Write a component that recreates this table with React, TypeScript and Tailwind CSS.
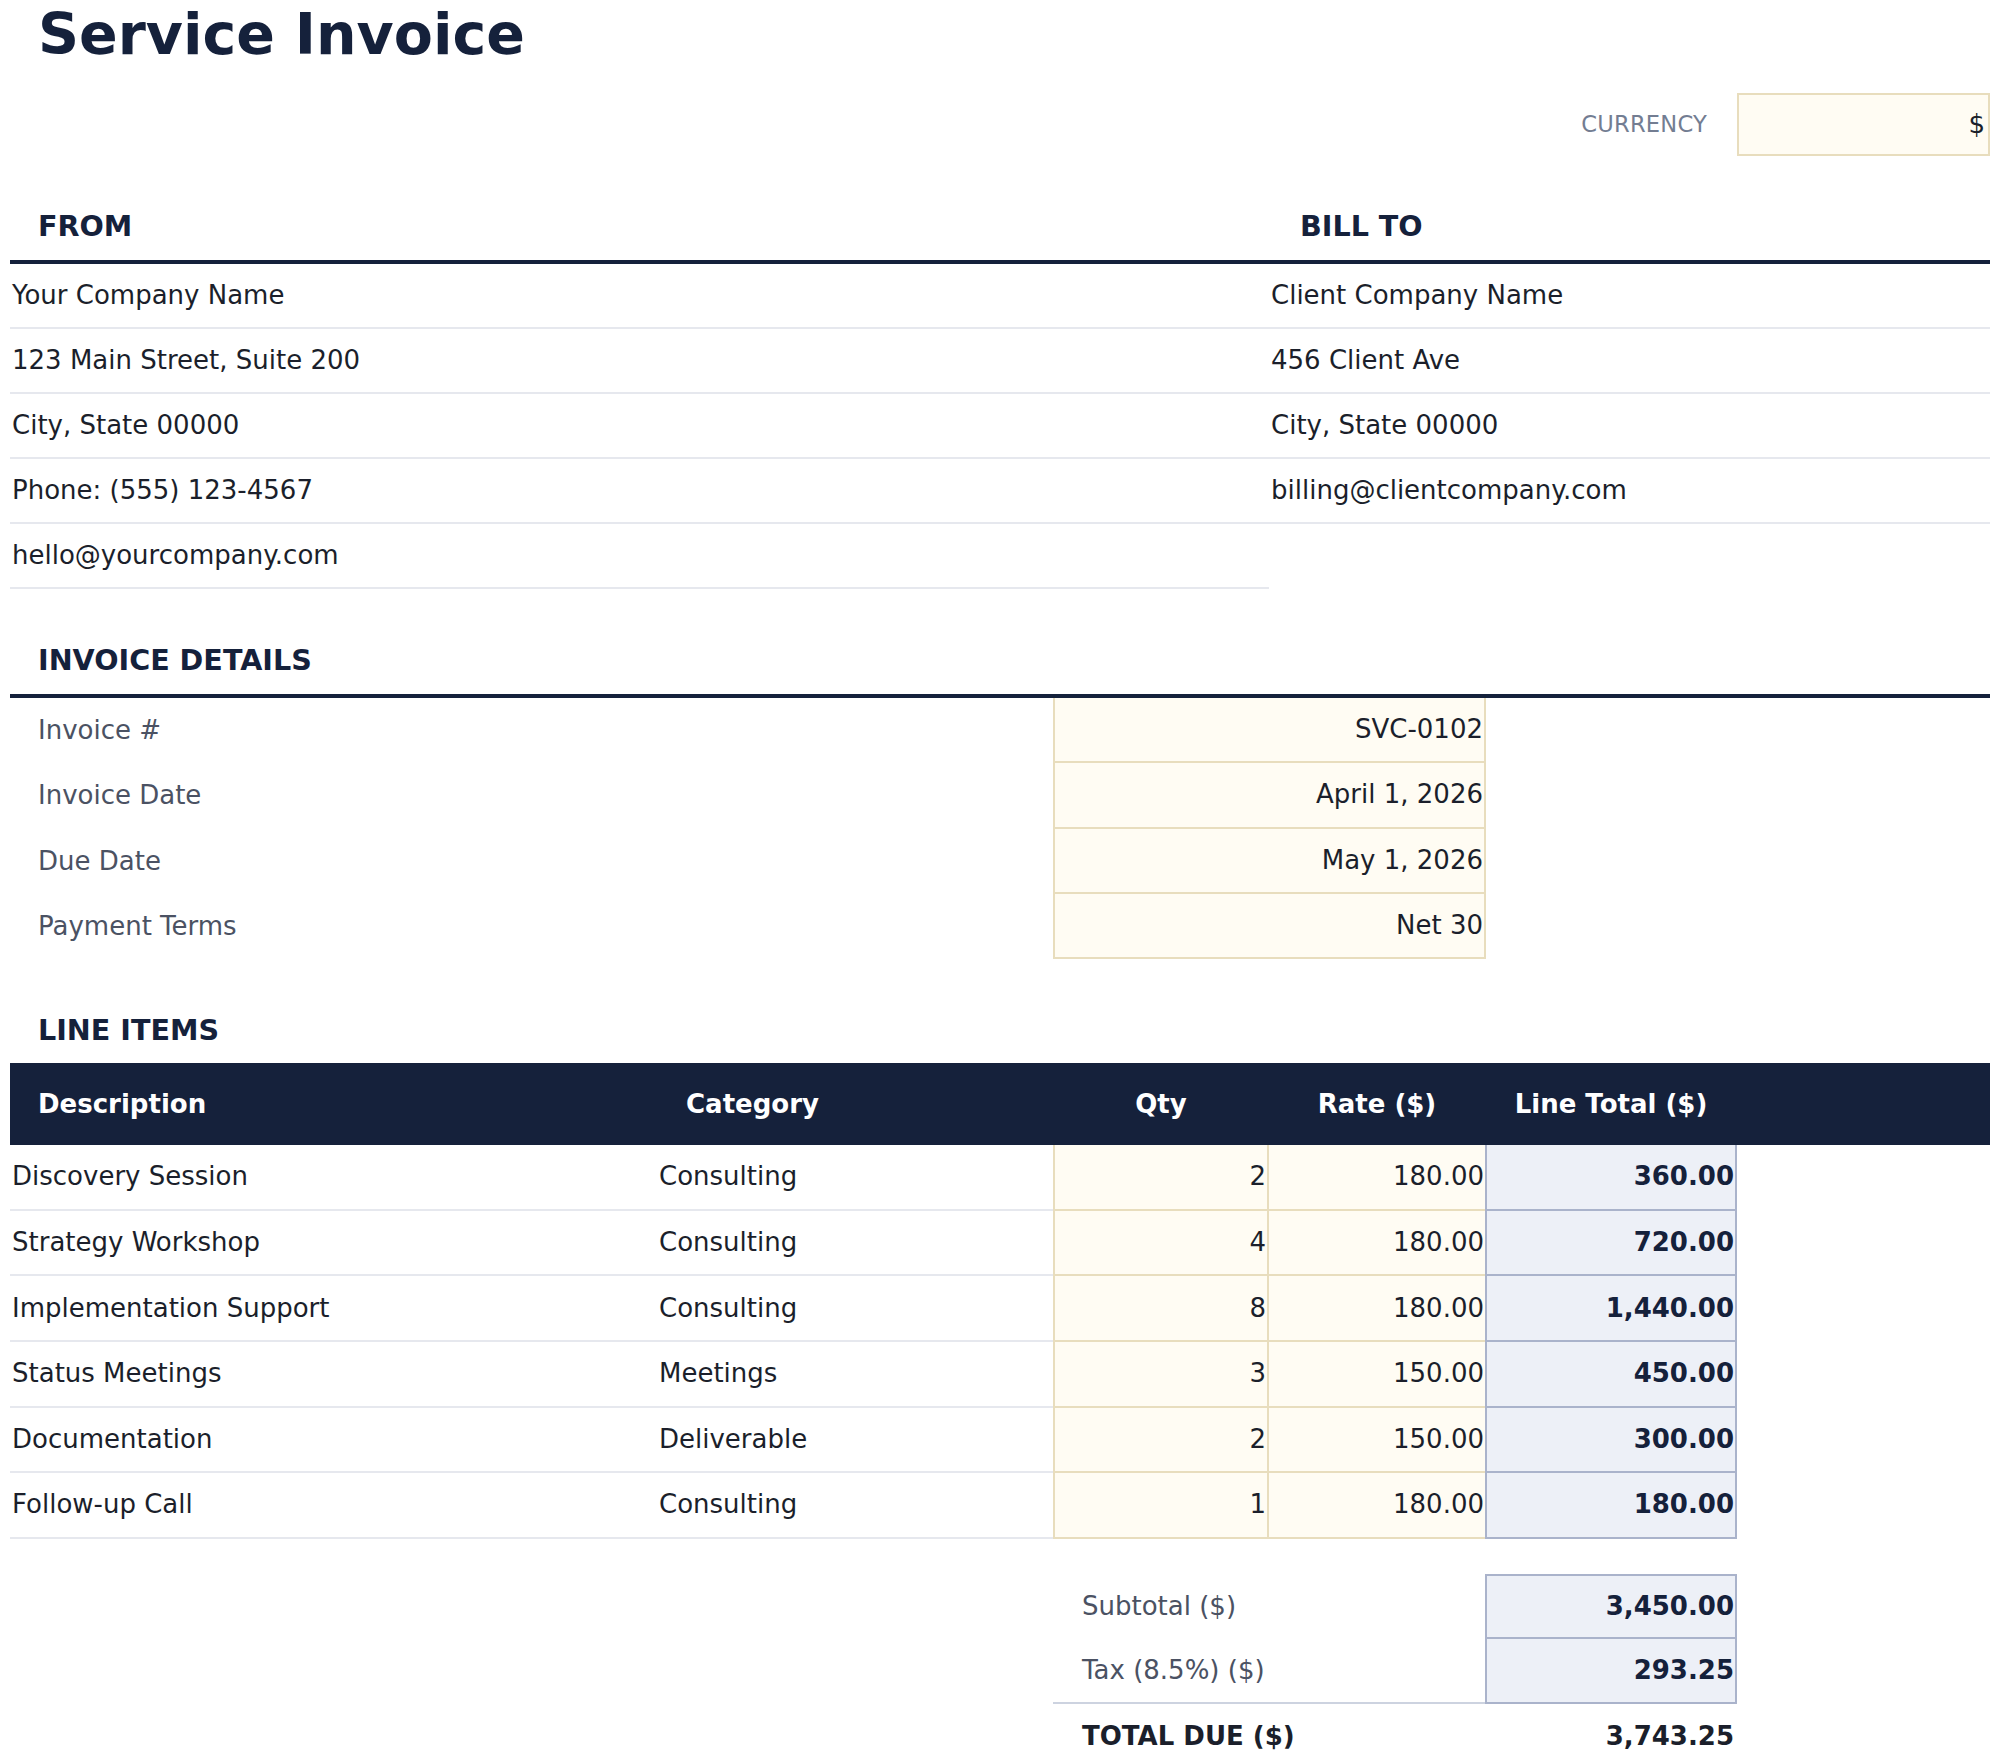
const navy = 'text-[#15213b]'

const fromLines = ['Your Company Name', '123 Main Street, Suite 200', 'City, State 00000', 'Phone: (555) 123-4567', 'hello@yourcompany.com']
const billLines = ['Client Company Name', '456 Client Ave', 'City, State 00000', 'billing@clientcompany.com']

const details = [
  { label: 'Invoice #', value: 'SVC-0102' },
  { label: 'Invoice Date', value: 'April 1, 2026' },
  { label: 'Due Date', value: 'May 1, 2026' },
  { label: 'Payment Terms', value: 'Net 30' },
]

const items = [
  { desc: 'Discovery Session', cat: 'Consulting', qty: 2, rate: '180.00', total: '360.00' },
  { desc: 'Strategy Workshop', cat: 'Consulting', qty: 4, rate: '180.00', total: '720.00' },
  { desc: 'Implementation Support', cat: 'Consulting', qty: 8, rate: '180.00', total: '1,440.00' },
  { desc: 'Status Meetings', cat: 'Meetings', qty: 3, rate: '150.00', total: '450.00' },
  { desc: 'Documentation', cat: 'Deliverable', qty: 2, rate: '150.00', total: '300.00' },
  { desc: 'Follow-up Call', cat: 'Consulting', qty: 1, rate: '180.00', total: '180.00' },
]

const cols = 'grid grid-cols-[647px_396px_216px_216px_252px_1fr]'

function SectionHeading({ children, className = '' }: { children: React.ReactNode; className?: string }) {
  return (
    <div className={`pb-[14px] border-b-4 border-[#15213b] text-[28.6px] font-bold leading-[40px] ${navy} ${className}`}>
      {children}
    </div>
  )
}

function LineRow({ text }: { text: string }) {
  return (
    <div className="h-[65px] flex items-center pl-[2px] border-b-2 border-[#e6e8ee]">{text}</div>
  )
}

export default function App() {
  return (
    <div className="min-h-screen bg-white px-[10px] pb-10 font-['DejaVu_Sans',sans-serif] text-[26px] text-[#1b1f2b]">
      <h1 className={`pl-[28px] text-[57px] font-bold leading-[68px] ${navy}`}>Service Invoice</h1>

      <div className={`${cols} mt-[25px] h-[63px]`}>
        <div className="col-start-5 flex items-center justify-end pr-[30px] text-[22.6px] tracking-[0.2px] text-[#737d92]">CURRENCY</div>
        <div className="flex items-center justify-end pr-[3px] bg-[#fffcf3] border-2 border-[#e8ddbd]">$</div>
      </div>

      <div className="mt-[50px] grid grid-cols-[1259px_1fr]">
        <div>
          <SectionHeading className="pl-[28px]">FROM</SectionHeading>
          {fromLines.map(l => <LineRow key={l} text={l} />)}
        </div>
        <div>
          <SectionHeading className="pl-[31px]">BILL TO</SectionHeading>
          {billLines.map(l => <LineRow key={l} text={l} />)}
        </div>
      </div>

      <div className="mt-[51px]">
        <SectionHeading className="pl-[28px]">INVOICE DETAILS</SectionHeading>
        {details.map(d => (
          <div key={d.label} className="grid grid-cols-[1043px_433px_1fr] h-[65.3px]">
            <div className="flex items-center pl-[28px] text-[#4b5263]">{d.label}</div>
            <div className="flex items-center justify-end pr-[1px] bg-[#fffcf3] border-x-2 border-b-2 border-[#e8ddbd]">{d.value}</div>
          </div>
        ))}
      </div>

      <div className="mt-[51px]">
        <div className={`pl-[28px] text-[28.6px] font-bold leading-[40px] ${navy}`}>LINE ITEMS</div>
        <div className={`${cols} mt-[13px] h-[82px] bg-[#15213b] text-white font-bold`}>
          <div className="flex items-center pl-[28px]">Description</div>
          <div className="flex items-center pl-[29px]">Category</div>
          <div className="flex items-center justify-center">Qty</div>
          <div className="flex items-center justify-center">Rate ($)</div>
          <div className="flex items-center justify-center">Line Total ($)</div>
          <div />
        </div>
        {items.map(it => (
          <div key={it.desc} className={`${cols} h-[65.6px]`}>
            <div className="flex items-center pl-[2px] border-b-2 border-[#e6e8ee]">{it.desc}</div>
            <div className="flex items-center pl-[2px] border-b-2 border-[#e6e8ee]">{it.cat}</div>
            <div className="flex items-center justify-end pr-[1px] bg-[#fffcf3] border-x-2 border-b-2 border-[#e8ddbd]">{it.qty}</div>
            <div className="flex items-center justify-end pr-[1px] bg-[#fffcf3] border-b-2 border-[#e8ddbd]">{it.rate}</div>
            <div className={`flex items-center justify-end pr-[1px] bg-[#edf0f7] border-x-2 border-b-2 border-[#aab3cb] font-bold ${navy}`}>{it.total}</div>
            <div />
          </div>
        ))}
      </div>

      <div className="mt-[35px]">
        <div className={`${cols} h-[65.4px]`}>
          <div className="col-start-3 col-span-2 flex items-center pl-[29px] text-[#4b5263]">Subtotal ($)</div>
          <div className={`flex items-center justify-end pr-[1px] bg-[#edf0f7] border-2 border-[#aab3cb] font-bold ${navy}`}>3,450.00</div>
        </div>
        <div className={`${cols} h-[65px]`}>
          <div className="col-start-3 col-span-2 flex items-center pl-[29px] text-[#4b5263] border-b-2 border-[#cdd3e0]">Tax (8.5%) ($)</div>
          <div className={`flex items-center justify-end pr-[1px] bg-[#edf0f7] border-x-2 border-b-2 border-[#aab3cb] font-bold ${navy}`}>293.25</div>
        </div>
        <div className={`${cols} h-[65.6px] font-bold`}>
          <div className="col-start-3 col-span-2 flex items-center pl-[29px]">TOTAL DUE ($)</div>
          <div className="flex items-center justify-end pr-[3px]">3,743.25</div>
        </div>
      </div>
    </div>
  )
}
